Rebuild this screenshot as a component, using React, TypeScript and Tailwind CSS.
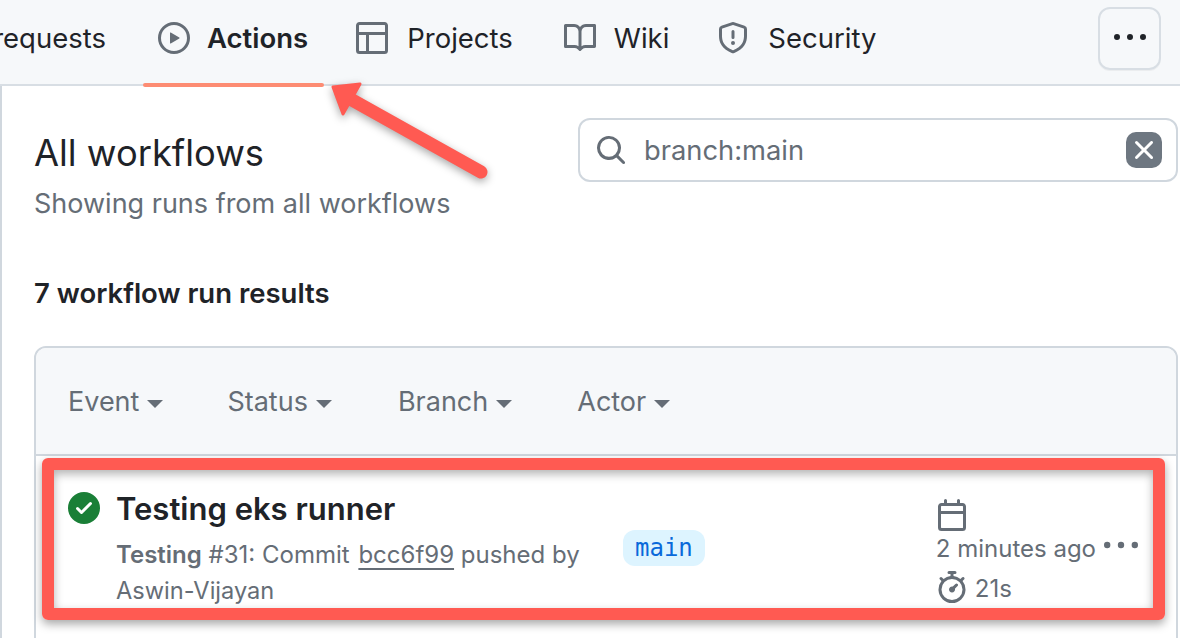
const P: Record<string, string> = {
  play: "M8 0a8 8 0 1 1 0 16A8 8 0 0 1 8 0ZM1.5 8a6.5 6.5 0 1 0 13 0 6.5 6.5 0 0 0-13 0Zm4.879-2.773 4.264 2.559a.25.25 0 0 1 0 .428l-4.264 2.559A.25.25 0 0 1 6 10.559V5.442a.25.25 0 0 1 .379-.215Z",
  table: "M0 1.75C0 .784.784 0 1.75 0h12.5C15.216 0 16 .784 16 1.75v12.5A1.75 1.75 0 0 1 14.25 16H1.75A1.75 1.75 0 0 1 0 14.25ZM6.5 6.5v8h7.75a.25.25 0 0 0 .25-.25V6.5Zm8-1.5V1.75a.25.25 0 0 0-.25-.25H1.75a.25.25 0 0 0-.25.25V5Zm-13 1.5v7.75c0 .138.112.25.25.25H5v-8Z",
  book: "M0 1.75A.75.75 0 0 1 .75 1h4.253c1.227 0 2.317.59 3 1.501A3.743 3.743 0 0 1 11.006 1h4.245a.75.75 0 0 1 .75.75v10.5a.75.75 0 0 1-.75.75h-4.507a2.25 2.25 0 0 0-1.591.659l-.622.621a.75.75 0 0 1-1.06 0l-.622-.621A2.25 2.25 0 0 0 5.258 13H.75a.75.75 0 0 1-.75-.75Zm7.251 10.324.004-5.073-.002-2.253A2.25 2.25 0 0 0 5.003 2.5H1.5v9h3.757a3.75 3.75 0 0 1 1.994.574ZM8.755 4.75l-.004 7.322a3.752 3.752 0 0 1 1.992-.572H14.5v-9h-3.495a2.25 2.25 0 0 0-2.25 2.25Z",
  shield: "M8.533.133a1.75 1.75 0 0 0-1.066 0l-5.25 1.68A1.75 1.75 0 0 0 1 3.48V7c0 1.566.32 3.182 1.303 4.682.983 1.498 2.585 2.813 5.032 3.855a1.697 1.697 0 0 0 1.33 0c2.447-1.042 4.049-2.357 5.032-3.855C14.68 10.182 15 8.566 15 7V3.48a1.75 1.75 0 0 0-1.217-1.667Zm-.61 1.429a.25.25 0 0 1 .153 0l5.25 1.68a.25.25 0 0 1 .174.238V7c0 1.358-.275 2.666-1.057 3.86-.784 1.194-2.121 2.34-4.366 3.297a.196.196 0 0 1-.154 0c-2.245-.956-3.582-2.104-4.366-3.298C2.775 9.666 2.5 8.36 2.5 7V3.48a.25.25 0 0 1 .174-.238ZM9 10.5a1 1 0 1 1-2 0 1 1 0 0 1 2 0Zm-.25-5.75a.75.75 0 1 0-1.5 0v3a.75.75 0 0 0 1.5 0Z",
  kebab: "M8 9a1.5 1.5 0 1 0 0-3 1.5 1.5 0 0 0 0 3ZM1.5 9a1.5 1.5 0 1 0 0-3 1.5 1.5 0 0 0 0 3Zm13 0a1.5 1.5 0 1 0 0-3 1.5 1.5 0 0 0 0 3Z",
  search: "M10.68 11.74a6 6 0 0 1-7.922-8.982 6 6 0 0 1 8.982 7.922l3.04 3.04a.749.749 0 0 1-.326 1.275.749.749 0 0 1-.734-.215ZM11.5 7a4.499 4.499 0 1 0-8.997 0A4.499 4.499 0 0 0 11.5 7Z",
  x: "M3.72 3.72a.75.75 0 0 1 1.06 0L8 6.94l3.22-3.22a.749.749 0 0 1 1.275.326.749.749 0 0 1-.215.734L9.06 8l3.22 3.22a.749.749 0 0 1-.326 1.275.749.749 0 0 1-.734-.215L8 9.06l-3.22 3.22a.751.751 0 0 1-1.042-.018.751.751 0 0 1-.018-1.042L6.94 8 3.72 4.78a.75.75 0 0 1 0-1.06Z",
  check: "M8 16A8 8 0 1 1 8 0a8 8 0 0 1 0 16Zm3.78-9.72a.751.751 0 0 0-.018-1.042.751.751 0 0 0-1.042-.018L6.75 9.19 5.28 7.72a.751.751 0 0 0-1.042.018.751.751 0 0 0-.018 1.042l2 2a.75.75 0 0 0 1.06 0Z",
  calendar: "M4.75 0a.75.75 0 0 1 .75.75V2h5V.75a.75.75 0 0 1 1.5 0V2h1.25c.966 0 1.75.784 1.75 1.75v10.5A1.75 1.75 0 0 1 13.25 16H2.75A1.75 1.75 0 0 1 1 14.25V3.75C1 2.784 1.784 2 2.75 2H4V.75A.75.75 0 0 1 4.75 0ZM2.5 7.5v6.75c0 .138.112.25.25.25h10.5a.25.25 0 0 0 .25-.25V7.5Zm10.75-4H2.75a.25.25 0 0 0-.25.25V6h11V3.75a.25.25 0 0 0-.25-.25Z",
  stopwatch: "M5.75.75A.75.75 0 0 1 6.5 0h3a.75.75 0 0 1 0 1.5h-.75v1l-.001.041a6.724 6.724 0 0 1 3.464 1.435l.007-.006.75-.75a.749.749 0 0 1 1.275.326.749.749 0 0 1-.215.734l-.75.75-.006.007a6.75 6.75 0 1 1-10.548 0L2.72 5.03l-.75-.75a.751.751 0 0 1 .018-1.042.751.751 0 0 1 1.042-.018l.75.75.007.006A6.72 6.72 0 0 1 7.25 2.541V1.5H6.5a.75.75 0 0 1-.75-.75ZM8 14.5a5.25 5.25 0 1 0-.001-10.501A5.25 5.25 0 0 0 8 14.5Zm.389-6.7 1.33-1.33a.75.75 0 1 1 1.061 1.06L9.45 8.861A1.503 1.503 0 0 1 8 10.75a1.499 1.499 0 1 1 .389-2.95Z",
};

function Oct({ name, className }: { name: string; className: string }) {
  return (
    <svg viewBox="0 0 16 16" fill="currentColor" className={className}>
      <path d={P[name]} />
    </svg>
  );
}

function NavItem({ icon, label, active, className }: { icon: string; label: string; active?: boolean; className: string }) {
  return (
    <div className={"relative flex items-center h-full pb-2 " + className}>
      <Oct name={icon} className="w-8 h-8 text-[#656d76] shrink-0" />
      <span className={"mt-[2px] text-[#1f2328] whitespace-nowrap " + (active ? "text-[27.5px] font-semibold" : "text-[27.5px]")}>{label}</span>
      {active && <div className="absolute left-0 right-0 -bottom-[3px] h-1 rounded-full bg-[#fd8c73]" />}
    </div>
  );
}

function Filter({ label, className }: { label: string; className: string }) {
  return (
    <div className={"flex items-center gap-2 pt-[2px] text-[27px] text-[#656d76] " + className}>
      <span>{label}</span>
      <span className="mt-1 w-0 h-0 border-x-[8px] border-x-transparent border-t-[8px] border-t-[#656d76]" />
    </div>
  );
}

export default function App() {
  return (
    <div className="relative w-[1180px] h-[638px] overflow-hidden bg-white font-['Inter',sans-serif]">
      <header className="h-[86px] bg-[#f6f8fa] border-b-2 border-[#d8dee4] flex items-center">
        <div className="w-[143px] pr-[37px] pb-[6px] shrink-0 flex justify-end overflow-hidden">
          <span className="text-[27.5px] text-[#1f2328] whitespace-nowrap">Pull requests</span>
        </div>
        <div className="flex h-full">
          <NavItem icon="play" label="Actions" active className="pl-[15px] pr-4 gap-[17px]" />
          <NavItem icon="table" label="Projects" className="ml-8 gap-[19px]" />
          <NavItem icon="book" label="Wiki" className="ml-[51px] gap-[18px]" />
          <NavItem icon="shield" label="Security" className="ml-[48px] gap-[19px]" />
        </div>
        <button className="ml-auto mr-[19px] mb-[8px] w-[63px] h-[63px] rounded-xl border-2 border-[#d8dee4] shadow-[0_1px_0_rgba(31,35,40,0.05)] flex items-center justify-center text-[#1f2328]">
          <Oct name="kebab" className="w-8 h-8" />
        </button>
      </header>

      <main className="h-[552px] border-l-2 border-[#d0d7de] pl-[32px] pr-[2px] overflow-hidden">
        <div className="flex justify-between pt-[32px]">
          <div>
            <h1 className="mt-[10px] text-[36.3px] leading-[50px] text-[#1f2328]">All workflows</h1>
            <p className="mt-[5px] text-[27px] leading-[42px] text-[#656d76]">Showing runs from all workflows</p>
          </div>
          <div className="w-[600px] h-[64px] rounded-xl border-2 border-[#d0d7de] flex items-center pl-[15px] pr-[14px]">
            <Oct name="search" className="w-8 h-8 text-[#656d76]" />
            <span className="ml-[17px] pt-[2px] text-[27.3px] text-[#656d76]">branch:main</span>
            <div className="ml-auto w-9 h-9 rounded-[10px] bg-[#6e7781] flex items-center justify-center text-white">
              <Oct name="x" className="w-8 h-8" />
            </div>
          </div>
        </div>

        <h2 className="mt-[48px] text-[27.5px] leading-[40px] font-semibold text-[#1f2328]">7 workflow run results</h2>

        <section className="mt-[33px] border-2 border-[#d0d7de] rounded-t-xl h-[400px]">
          <div className="h-[108px] bg-[#f6f8fa] rounded-t-[10px] border-b-2 border-[#d0d7de] flex items-center pl-[32px]">
            <Filter label="Event" className="mr-[64px]" />
            <Filter label="Status" className="mr-[66px]" />
            <Filter label="Branch" className="mr-[65px]" />
            <Filter label="Actor" className="" />
          </div>
          <div className="flex items-start pt-[36px] pl-[32px] text-[#656d76]">
            <Oct name="check" className="w-8 h-8 text-[#1a7f37] shrink-0" />
            <div className="ml-[16px] w-[507px] shrink-0 -mt-[3px]">
              <div className="text-[31px] leading-[40px] font-semibold text-[#1f2328] whitespace-nowrap">Testing eks runner</div>
              <div className="mt-[8px] text-[24px] leading-[36px] whitespace-nowrap">
                <span className="font-semibold">Testing</span> #31: Commit{" "}
                <span className="ml-[2px] underline underline-offset-[5px]">bcc6f99</span> pushed by
                <br />
                <span className="text-[23.6px]">Aswin-Vijayan</span>
              </div>
            </div>
            <div className="mt-[38px] h-9 px-3 rounded-xl bg-[#ddf4ff] text-[#0969da] text-[24px] leading-[36px] font-['DejaVu_Sans_Mono',monospace]">
              main
            </div>
            <div className="ml-[231px] mt-[7px] text-[24px] leading-[36px]">
              <Oct name="calendar" className="w-8 h-8" />
              <div className="flex items-center whitespace-nowrap">
                2 minutes ago
                <Oct name="kebab" className="ml-[8px] w-[34px] h-[34px] -mt-[6px]" />
              </div>
              <div className="flex items-center mt-[4px]">
                <Oct name="stopwatch" className="w-8 h-8 mr-[7px] -mt-[4px]" />
                21s
              </div>
            </div>
          </div>
        </section>
      </main>

      <div className="absolute left-[42px] top-[458px] w-[1123px] h-[162px] rounded-md border-[12px] border-[#ff5a52] shadow-[0_4px_10px_rgba(0,0,0,0.35),inset_0_4px_10px_rgba(0,0,0,0.3)]" />

      <svg className="absolute left-[320px] top-[75px] w-[180px] h-[115px] drop-shadow-[0_3px_4px_rgba(0,0,0,0.35)]" viewBox="320 75 180 115">
        <path d="M345 96 L481 172" stroke="#ff5a52" strokeWidth="13" strokeLinecap="round" fill="none" />
        <path d="M333 87 L360 84 L343 114 Z" fill="#ff5a52" stroke="#ff5a52" strokeWidth="3" strokeLinejoin="round" />
      </svg>
    </div>
  );
}
